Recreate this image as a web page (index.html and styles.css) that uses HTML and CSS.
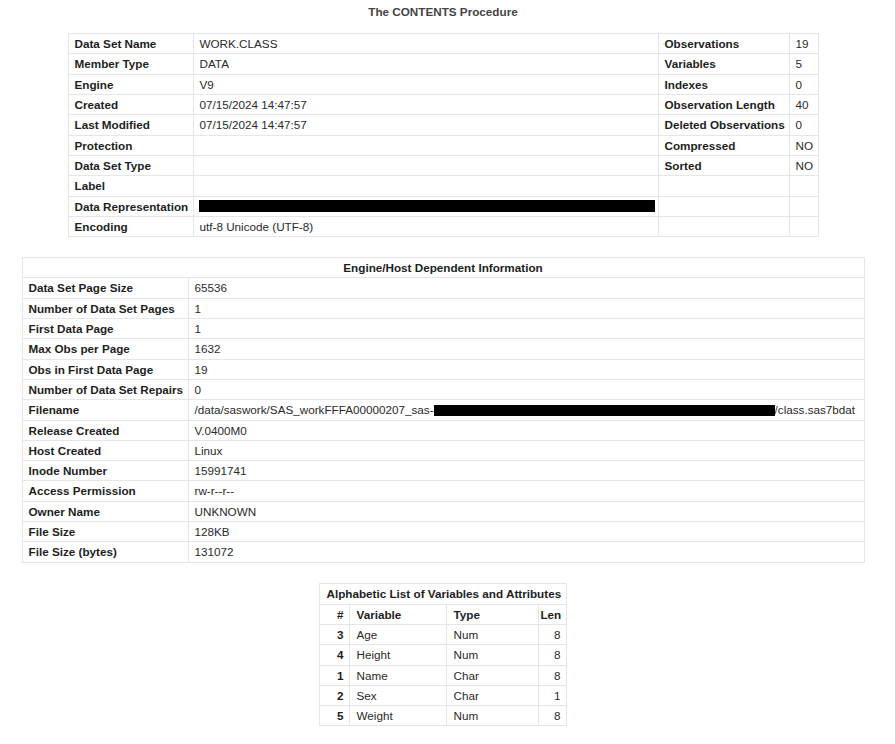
FILE: index.html
```html
<!DOCTYPE html>
<html>
<head>
<meta charset="utf-8">
<link rel="stylesheet" href="styles.css">
</head>
<body>
<div class="page">
  <div class="title">The CONTENTS Procedure</div>

  <table class="tbl t1">
    <colgroup><col class="c1a"><col class="c1b"><col class="c1c"><col class="c1d"></colgroup>
    <tr><th>Data Set Name</th><td>WORK.CLASS</td><th>Observations</th><td>19</td></tr>
    <tr><th>Member Type</th><td>DATA</td><th>Variables</th><td>5</td></tr>
    <tr><th>Engine</th><td>V9</td><th>Indexes</th><td>0</td></tr>
    <tr><th>Created</th><td>07/15/2024 14:47:57</td><th>Observation Length</th><td>40</td></tr>
    <tr><th>Last Modified</th><td>07/15/2024 14:47:57</td><th>Deleted Observations</th><td>0</td></tr>
    <tr><th>Protection</th><td></td><th>Compressed</th><td>NO</td></tr>
    <tr><th>Data Set Type</th><td></td><th>Sorted</th><td>NO</td></tr>
    <tr><th>Label</th><td></td><th></th><td></td></tr>
    <tr><th>Data Representation</th><td><span class="redact r1"></span></td><th></th><td></td></tr>
    <tr><th>Encoding</th><td>utf-8 Unicode (UTF-8)</td><th></th><td></td></tr>
  </table>

  <table class="tbl t2">
    <colgroup><col class="c2a"><col class="c2b"></colgroup>
    <tr><th colspan="2" class="center">Engine/Host Dependent Information</th></tr>
    <tr><th>Data Set Page Size</th><td>65536</td></tr>
    <tr><th>Number of Data Set Pages</th><td>1</td></tr>
    <tr><th>First Data Page</th><td>1</td></tr>
    <tr><th>Max Obs per Page</th><td>1632</td></tr>
    <tr><th>Obs in First Data Page</th><td>19</td></tr>
    <tr><th>Number of Data Set Repairs</th><td>0</td></tr>
    <tr><th>Filename</th><td>/data/saswork/SAS_workFFFA00000207_sas-<span class="redact r2"></span>/class.sas7bdat</td></tr>
    <tr><th>Release Created</th><td>V.0400M0</td></tr>
    <tr><th>Host Created</th><td>Linux</td></tr>
    <tr><th>Inode Number</th><td>15991741</td></tr>
    <tr><th>Access Permission</th><td>rw-r--r--</td></tr>
    <tr><th>Owner Name</th><td>UNKNOWN</td></tr>
    <tr><th>File Size</th><td>128KB</td></tr>
    <tr><th>File Size (bytes)</th><td>131072</td></tr>
  </table>

  <table class="tbl t3">
    <colgroup><col class="c3a"><col class="c3b"><col class="c3c"><col class="c3d"></colgroup>
    <tr><th colspan="4" class="center">Alphabetic List of Variables and Attributes</th></tr>
    <tr><th class="right">#</th><th>Variable</th><th>Type</th><th class="right len">Len</th></tr>
    <tr><th class="right">3</th><td>Age</td><td>Num</td><td class="right len">8</td></tr>
    <tr><th class="right">4</th><td>Height</td><td>Num</td><td class="right len">8</td></tr>
    <tr><th class="right">1</th><td>Name</td><td>Char</td><td class="right len">8</td></tr>
    <tr><th class="right">2</th><td>Sex</td><td>Char</td><td class="right len">1</td></tr>
    <tr><th class="right">5</th><td>Weight</td><td>Num</td><td class="right len">8</td></tr>
  </table>
</div>
</body>
</html>
```

FILE: styles.css
```css
html, body {
  margin: 0;
  padding: 0;
  background: #fff;
}
body {
  font-family: "Liberation Sans", Arial, sans-serif;
  font-size: 11.7px;
  color: #222;
}
.page {
  width: 886px;
  padding-top: 5px;
}
.title {
  text-align: center;
  font-weight: bold;
  color: #444;
  line-height: 13.4px;
  margin-bottom: 14.6px;
}
.tbl {
  border-collapse: collapse;
  table-layout: fixed;
  margin: 0 auto 19.6px auto;
}
.tbl th, .tbl td {
  border: 1px solid #e6e6e6;
  padding: 3px 6px;
  line-height: 13.33px;
  text-align: left;
  vertical-align: top;
  white-space: nowrap;
}
.tbl th {
  font-weight: bold;
  color: #1e1e1e;
}
.tbl td {
  font-weight: normal;
  color: #2a2a2a;
}
.tbl .center { text-align: center; }
.tbl .right { text-align: right; }
.tbl .len { padding-left: 1px; padding-right: 5px; }

.t1 { width: 751px; }
.c1a { width: 125px; }
.c1b { width: 465px; }
.c1c { width: 131px; }
.c1d { width: 29px; }

.t2 { width: 843px; margin-bottom: 20.4px; }
.c2a { width: 166px; }
.c2b { width: 676px; }

.t3 { width: 247px; }
.c3a { width: 30px; }
.c3b { width: 97px; }
.c3c { width: 92px; }
.c3d { width: 27px; }

.redact {
  display: inline-block;
  background: #000;
}
.r1 {
  width: 456px;
  height: 12px;
  vertical-align: -1.5px;
  margin-left: -1px;
}
.r2 {
  width: 341px;
  height: 11px;
  vertical-align: -2px;
}
```
